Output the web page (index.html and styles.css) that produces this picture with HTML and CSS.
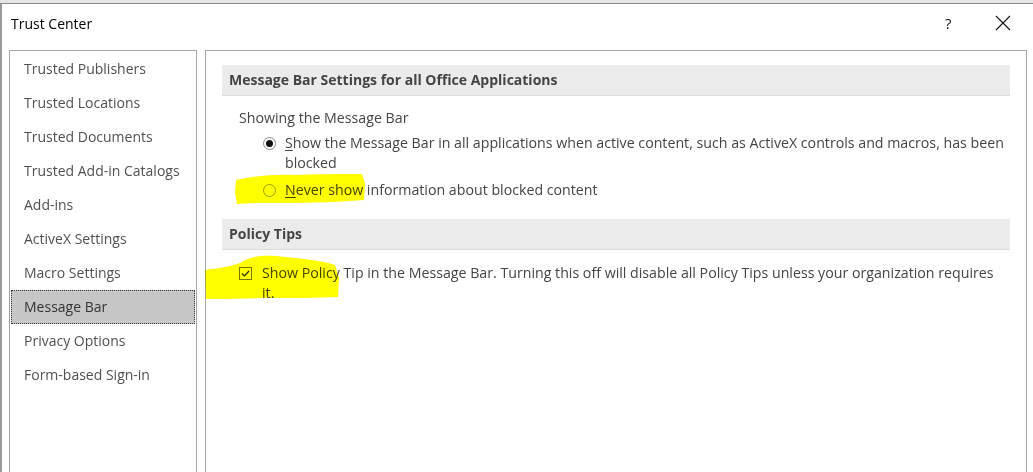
FILE: index.html
```html
<!DOCTYPE html>
<html>
<head>
<meta charset="utf-8">
<link rel="stylesheet" href="styles.css">
</head>
<body>
<div class="backdrop"></div>
<div class="dialog">
  <div class="titlebar">
    <span class="title">Trust Center</span>
    <span class="help">?</span>
    <span class="close"><svg width="16" height="16" viewBox="0 0 16 16"><path d="M1 1 L15 15 M15 1 L1 15" stroke="#111" stroke-width="1.1" fill="none"/></svg></span>
  </div>
  <div class="body">
    <nav class="nav">
      <div class="nav-item">Trusted Publishers</div>
      <div class="nav-item">Trusted Locations</div>
      <div class="nav-item">Trusted Documents</div>
      <div class="nav-item">Trusted Add-in Catalogs</div>
      <div class="nav-item">Add-ins</div>
      <div class="nav-item">ActiveX Settings</div>
      <div class="nav-item">Macro Settings</div>
      <div class="nav-item selected">Message Bar</div>
      <div class="nav-item">Privacy Options</div>
      <div class="nav-item">Form-based Sign-in</div>
    </nav>
    <main class="content">
      <div class="section-head first">Message Bar Settings for all Office Applications</div>
      <div class="group-label">Showing the Message Bar</div>
      <div class="option first-opt">
        <span class="radio checked"><span class="dot"></span></span>
        <span class="opt-text"><u>S</u>how the Message Bar in all applications when active content, such as ActiveX controls and macros, has been blocked</span>
      </div>
      <div class="option second">
        <span class="radio"></span>
        <span class="opt-text"><u>N</u>ever show information about blocked content</span>
      </div>
      <div class="section-head policy">Policy Tips</div>
      <div class="option check-row">
        <span class="checkbox"><svg width="11" height="11" viewBox="0 0 11 11"><path d="M2 5.5 L4.5 8 L9 3" stroke="#222" stroke-width="1.2" fill="none"/></svg></span>
        <span class="opt-text">Show Policy Tip in the Message Bar. Turning this off will disable all Policy Tips unless your organization requires it.</span>
      </div>
    </main>
  </div>
  <svg class="hl hl1" width="134" height="36" viewBox="0 0 134 36"><path d="M2 10 C20 6 40 4 60 5 C80 4 105 4 128 4 L131 14 L130 30 L100 32 L60 33 L20 33 L3 34 L1 22 Z" fill="#ffff00"/></svg>
  <svg class="hl hl2" width="138" height="50" viewBox="0 0 138 50"><path d="M0 17 C12 15 25 14 35 10 C45 3 60 1 80 4 C100 6 118 8 130 12 L134 25 L133 44 L100 45 L60 45 L20 46 L1 46 Z" fill="#ffff00"/></svg>
</div>
</body>
</html>
```
FILE: styles.css
```css
* { box-sizing: border-box; }
html, body { margin: 0; padding: 0; background: #fff; overflow: hidden; }
body {
  width: 1033px;
  height: 472px;
  font-family: "Open Sans", "Noto Sans", sans-serif;
  font-size: 14px;
  color: #444;
  position: relative;
}
.backdrop {
  height: 4px;
  background: #e6e6e6;
  border-bottom: 1px solid #8a8a8a;
}
.dialog {
  position: relative;
  height: 468px;
  border-left: 2px solid #9a9a9a;
}
.titlebar {
  display: flex;
  align-items: center;
  height: 46px;
  padding-left: 9px;
}
.title {
  color: #000;
  font-size: 14px;
  flex: 1;
  position: relative;
  top: -4px;
}
.help {
  color: #111;
  font-size: 15px;
  width: 50px;
  position: relative;
  top: -4px;
}
.close {
  width: 38px;
  display: flex;
  position: relative;
  top: -4px;
}
.body {
  display: flex;
  gap: 8px;
  padding-left: 7px;
  height: 460px;
}
.nav {
  width: 188px;
  border: 1px solid #a6a6a6;
  border-bottom: none;
  padding: 1px 1px 0 1px;
}
.nav-item {
  height: 34px;
  line-height: 32px;
  padding-left: 12px;
  color: #505050;
  white-space: nowrap;
  border: 1px solid transparent;
}
.nav-item.selected {
  background: #c6c6c6;
  border: 1px dotted #333;
  color: #333;
}
.content {
  width: 822px;
  border: 1px solid #a6a6a6;
  border-bottom: none;
  padding: 14px 16px 0 16px;
  font-size: 14.2px;
}
.section-head {
  background: #ebebeb;
  border-bottom: 1px solid #dcdcdc;
  height: 31px;
  line-height: 30px;
  padding-left: 7px;
  font-weight: 700;
  font-size: 14px;
  color: #444;
}
.section-head.policy { margin-top: 19px; }
.group-label {
  margin-top: 12px;
  padding-left: 17px;
  line-height: 20px;
}
.option {
  display: flex;
  align-items: flex-start;
  margin-top: 4px;
  margin-right: 4px;
  padding-left: 41px;
  line-height: 20px;
}
.option.first-opt { margin-top: 5px; }
.option.second { margin-top: 7px; }
.radio {
  width: 13px;
  height: 13px;
  border: 1px solid #999;
  border-radius: 50%;
  margin-top: 4px;
  margin-right: 9px;
  flex: none;
  display: flex;
  align-items: center;
  justify-content: center;
  background: #fff;
}
.radio.checked { border-color: #8a8a8a; }
.dot { width: 7px; height: 7px; border-radius: 50%; background: #111; }
.opt-text u { text-decoration: underline; text-underline-offset: 2px; }
.check-row {
  padding-left: 17px;
  margin-top: 13px;
}
.checkbox {
  width: 13px;
  height: 13px;
  border: 1px solid #777;
  margin-top: 4px;
  margin-right: 10px;
  flex: none;
  display: flex;
  align-items: center;
  justify-content: center;
}
.hl {
  position: absolute;
  mix-blend-mode: multiply;
  pointer-events: none;
}
.hl1 { left: 232px; top: 166px; }
.hl2 { left: 203px; top: 249px; }
```
